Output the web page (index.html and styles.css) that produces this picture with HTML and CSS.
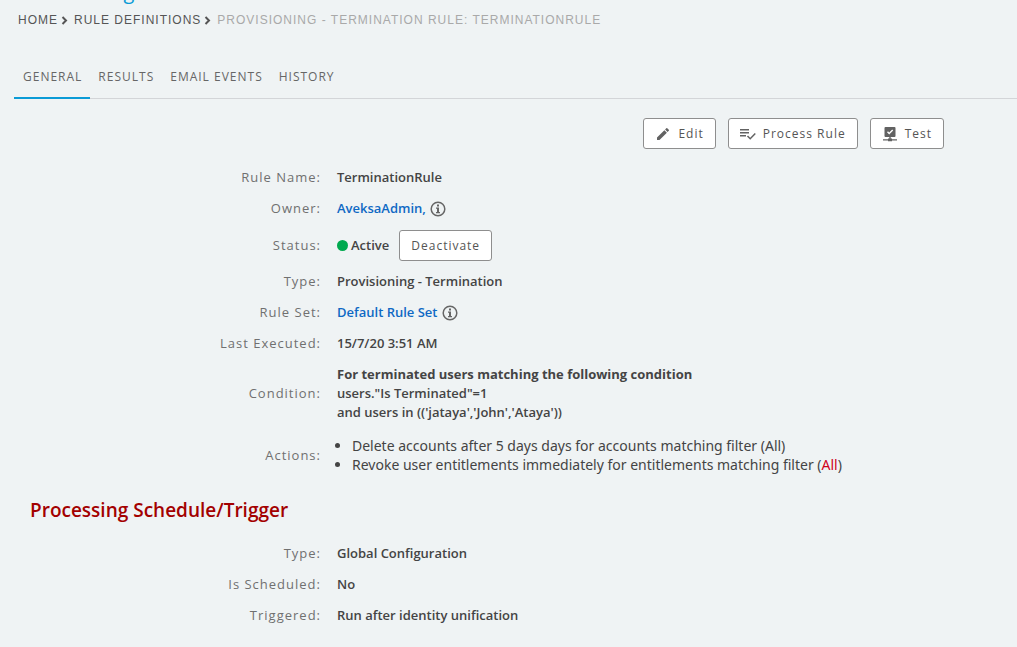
FILE: index.html
```html
<!DOCTYPE html>
<html lang="en">
<head>
<meta charset="utf-8">
<title>Rule Definitions</title>
<link rel="stylesheet" href="styles.css">
</head>
<body>
<header class="page-header">
  <h1 class="page-title">Provisioning</h1>
</header>
<nav class="breadcrumb" aria-label="Breadcrumb">
  <a href="#">HOME</a>
  <svg class="chevron" viewBox="0 0 7 9"><path d="M1.5 1 5 4.500 1.500 8"/></svg>
  <a href="#">RULE DEFINITIONS</a>
  <svg class="chevron" viewBox="0 0 7 9"><path d="M1.5 1 5 4.500 1.500 8"/></svg>
  <span class="current">PROVISIONING - TERMINATION RULE: TERMINATIONRULE</span>
</nav>
<nav class="tabs" aria-label="Rule sections">
  <a class="tab active" href="#">GENERAL</a>
  <a class="tab" href="#">RESULTS</a>
  <a class="tab" href="#">EMAIL EVENTS</a>
  <a class="tab" href="#">HISTORY</a>
</nav>
<main>
  <div class="toolbar">
    <button class="btn" type="button">
      <svg class="icon" viewBox="0 0 24 24"><path d="M3 17.250V21h3.750L17.810 9.940l-3.750-3.750L3 17.250zM20.710 7.040a1 1 0 0 0 0-1.410l-2.340-2.340a1 1 0 0 0-1.410 0l-1.830 1.830 3.750 3.750 1.830-1.830z"/></svg>
      Edit
    </button>
    <button class="btn" type="button">
      <svg class="icon" viewBox="0 0 16 16"><path d="M0 3h9v1.500H0zM0 6h9v1.500H0zM0 9h6v1.500H0z"/><path class="stroke" d="M7.500 10 10.200 12.700 15.300 7.500"/></svg>
      Process Rule
    </button>
    <button class="btn" type="button">
      <svg class="icon" viewBox="0 0 16 16"><path fill-rule="evenodd" d="M3.500 1h9q1 0 1 1v8q0 1-1 1h-9q-1 0-1-1V2q0-1 1-1zM5 6.200 7.200 8.400 11.200 4.400 10.200 3.400 7.200 6.400 6 5.200z"/><path d="M7.300 11h1.400v1.500H10v.7h5v1.200h-5v.8H6v-.8H1v-1.200h5v-.7h1.300z"/></svg>
      Test
    </button>
  </div>
  <dl class="details">
    <div class="row"><dt>Rule Name:</dt><dd>TerminationRule</dd></div>
    <div class="row"><dt>Owner:</dt><dd class="inline"><a href="#">AveksaAdmin,</a>
      <svg class="info" viewBox="0 0 16 16"><circle cx="8" cy="8" r="6.800"/><path d="M7 3.500h2v2H7zM6 6.500h3v4.500h1v1.200H6V11h1V7.700H6z"/></svg></dd></div>
    <div class="row status"><dt>Status:</dt><dd class="inline"><span class="dot"></span><span class="state">Active</span><button class="btn" type="button">Deactivate</button></dd></div>
    <div class="row"><dt>Type:</dt><dd>Provisioning - Termination</dd></div>
    <div class="row"><dt>Rule Set:</dt><dd class="inline"><a href="#">Default Rule Set</a>
      <svg class="info" viewBox="0 0 16 16"><circle cx="8" cy="8" r="6.800"/><path d="M7 3.500h2v2H7zM6 6.500h3v4.500h1v1.200H6V11h1V7.700H6z"/></svg></dd></div>
    <div class="row"><dt>Last Executed:</dt><dd>15/7/20 3:51 AM</dd></div>
    <div class="row"><dt>Condition:</dt><dd><strong>For terminated users matching the following condition</strong><br>users."Is Terminated"=1<br>and users in (('jataya','John','Ataya'))</dd></div>
    <div class="row tall"><dt>Actions:</dt><dd>
      <ul class="actions">
        <li>Delete accounts after 5 days days for accounts matching filter (All)</li>
        <li>Revoke user entitlements immediately for entitlements matching filter (<span class="alert">All</span>)</li>
      </ul></dd></div>
  </dl>
  <h2 class="section-title">Processing Schedule/Trigger</h2>
  <dl class="details">
    <div class="row"><dt>Type:</dt><dd>Global Configuration</dd></div>
    <div class="row"><dt>Is Scheduled:</dt><dd>No</dd></div>
    <div class="row"><dt>Triggered:</dt><dd>Run after identity unification</dd></div>
  </dl>
</main>
</body>
</html>
```
FILE: styles.css
```css
* { box-sizing: border-box; }
body {
  margin: 0;
  background: #eff3f4;
  color: #444;
  font: 13px/19px "Open Sans", "Noto Sans", sans-serif;
}
a { text-decoration: none; color: #0f69c4; }
.page-header {
  display: flex;
  align-items: flex-end;
  height: 4px;
  padding-left: 20px;
  overflow: hidden;
}
.page-title {
  margin: 0;
  color: #0a9bd6;
  font-size: 20px;
  font-weight: 400;
  line-height: 24px;
}
.breadcrumb {
  display: flex;
  align-items: center;
  padding: 7px 18px 5px;
  font: 12px/19px "Liberation Sans", Arial, sans-serif;
  letter-spacing: 1px;
}
.breadcrumb a { color: #555; }
.breadcrumb .current { color: #a9a9a9; }
.chevron {
  width: 7px;
  height: 9px;
  margin: 0 6px 0 3px;
  fill: none;
  stroke: #555;
  stroke-width: 2;
}
.tabs {
  display: flex;
  margin: 29px 0 0 14px;
  border-bottom: 1px solid #d3d5d8;
}
.tab {
  padding: 3px 8px 11px;
  margin-bottom: -1px;
  border-bottom: 2px solid transparent;
  color: #666;
  font-size: 12px;
  letter-spacing: 1px;
}
.tab.active { padding-left: 9px; border-color: #0a9bd6; }
.toolbar {
  display: flex;
  justify-content: flex-end;
  gap: 12px;
  padding: 19px 73px 13px 0;
}
.btn {
  display: flex;
  align-items: center;
  gap: 7px;
  height: 31px;
  padding: 0 11px;
  border: 1px solid #8e8e8e;
  border-radius: 3px;
  background: #fff;
  color: #555;
  font: inherit;
  font-size: 12px;
  font-weight: 400;
  letter-spacing: 1px;
}
.icon { width: 16px; height: 16px; fill: #626262; }
.icon .stroke { fill: none; stroke: #626262; stroke-width: 1.5; }
.details { margin: 0; }
.row {
  display: grid;
  grid-template-columns: 321px 1fr;
  column-gap: 16px;
  align-items: center;
  padding: 6px 0;
}
.row.status { padding-bottom: 5px; }
.row.tall { padding: 8px 0 10px; }
dt { text-align: right; color: #707070; letter-spacing: 1px; }
dd { margin: 0; font-weight: 600; }
.inline { display: flex; align-items: center; }
.info { width: 16px; height: 16px; margin-left: 4px; fill: #666; }
.info circle { fill: none; stroke: #666; stroke-width: 1.5; }
.dot { width: 11px; height: 11px; border-radius: 50%; background: #00a94f; }
.state { margin: 0 10px 0 3px; }
strong { font-weight: 700; }
.actions {
  margin: 0;
  padding-left: 15px;
  font-family: "Noto Sans", "Open Sans", sans-serif;
  font-size: 14px;
  font-weight: 400;
}
.alert { color: #d0021b; }
.section-title {
  margin: 13px 0 15px 30px;
  color: #a30000;
  font-size: 19px;
  font-weight: 600;
  line-height: 26px;
}
```
